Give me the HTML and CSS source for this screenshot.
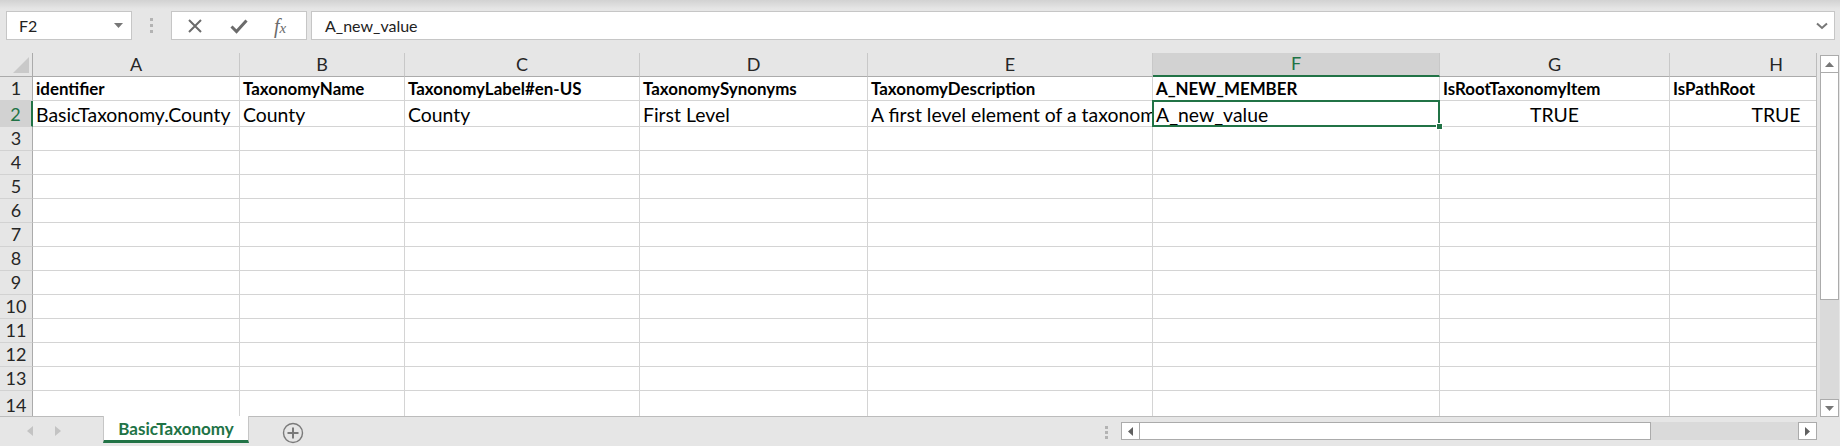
FILE: index.html
```
<!DOCTYPE html>
<html lang="en">
<head>
    <meta charset="UTF-8">
    <title>BasicTaxonomy - Excel</title>
    <link rel="stylesheet" href="styles.css">
</head>
<body>
    <div class="formula-bar">
        <div class="name-box">
            <span>F2</span>
            <svg class="caret" width="9" height="5" viewBox="0 0 9 5"><path d="M0 0h9L4.5 5z" fill="#777"/></svg>
        </div>
        <div class="grip"><i></i><i></i><i></i></div>
        <div class="fx-buttons">
            <svg width="16" height="16" viewBox="0 0 16 16"><path d="M2 2l12 12M14 2L2 14" stroke="#6b6b6b" stroke-width="2" fill="none"/></svg>
            <svg width="18" height="16" viewBox="0 0 18 16"><path d="M1.5 8.5l5 5L16.5 2.5" stroke="#6b6b6b" stroke-width="3" fill="none"/></svg>
            <span class="fx">f<sub>x</sub></span>
        </div>
        <div class="formula-input">
            <span>A_new_value</span>
            <svg width="12" height="8" viewBox="0 0 12 8"><path d="M1 1.5l5 4.5 5-4.5" stroke="#777" stroke-width="2" fill="none"/></svg>
        </div>
    </div>

    <div class="sheet-area">
        <div class="grid-wrap">
            <div class="row head">
                <div class="corner"><svg width="16" height="16" viewBox="0 0 16 16"><path d="M16 0v16H0z" fill="#c9c9c9"/></svg></div>
                <div>A</div><div>B</div><div>C</div><div>D</div><div>E</div><div class="sel">F</div><div>G</div><div>H</div>
            </div>
            <div class="row bold">
                <div class="rh">1</div>
                <div>identifier</div><div>TaxonomyName</div><div>TaxonomyLabel#en-US</div><div>TaxonomySynonyms</div><div>TaxonomyDescription</div><div>A_NEW_MEMBER</div><div>IsRootTaxonomyItem</div><div>IsPathRoot</div>
            </div>
            <div class="row tall">
                <div class="rh sel">2</div>
                <div>BasicTaxonomy.County</div><div>County</div><div>County</div><div>First Level</div><div>A first level element of a taxonomy</div><div class="active">A_new_value</div><div class="center">TRUE</div><div class="center">TRUE</div>
            </div>
            <div class="row"><div class="rh">3</div><div></div><div></div><div></div><div></div><div></div><div></div><div></div><div></div></div>
            <div class="row"><div class="rh">4</div><div></div><div></div><div></div><div></div><div></div><div></div><div></div><div></div></div>
            <div class="row"><div class="rh">5</div><div></div><div></div><div></div><div></div><div></div><div></div><div></div><div></div></div>
            <div class="row"><div class="rh">6</div><div></div><div></div><div></div><div></div><div></div><div></div><div></div><div></div></div>
            <div class="row"><div class="rh">7</div><div></div><div></div><div></div><div></div><div></div><div></div><div></div><div></div></div>
            <div class="row"><div class="rh">8</div><div></div><div></div><div></div><div></div><div></div><div></div><div></div><div></div></div>
            <div class="row"><div class="rh">9</div><div></div><div></div><div></div><div></div><div></div><div></div><div></div><div></div></div>
            <div class="row"><div class="rh">10</div><div></div><div></div><div></div><div></div><div></div><div></div><div></div><div></div></div>
            <div class="row"><div class="rh">11</div><div></div><div></div><div></div><div></div><div></div><div></div><div></div><div></div></div>
            <div class="row"><div class="rh">12</div><div></div><div></div><div></div><div></div><div></div><div></div><div></div><div></div></div>
            <div class="row"><div class="rh">13</div><div></div><div></div><div></div><div></div><div></div><div></div><div></div><div></div></div>
            <div class="row last"><div class="rh">14</div><div></div><div></div><div></div><div></div><div></div><div></div><div></div><div></div></div>
        </div>
        <div class="vscroll">
            <div class="sb-btn"><svg width="9" height="5" viewBox="0 0 9 5"><path d="M0 5h9L4.5 0z" fill="#777"/></svg></div>
            <div class="sb-thumb v"></div>
            <div class="sb-track"></div>
            <div class="sb-btn"><svg width="9" height="5" viewBox="0 0 9 5"><path d="M0 0h9L4.5 5z" fill="#777"/></svg></div>
        </div>
    </div>

    <div class="tab-bar">
        <div class="tab-nav">
            <svg width="6" height="10" viewBox="0 0 6 10"><path d="M6 0v10L0 5z" fill="#c3c3c3"/></svg>
            <svg width="6" height="10" viewBox="0 0 6 10"><path d="M0 0v10l6-5z" fill="#c3c3c3"/></svg>
        </div>
        <div class="sheet-tab">BasicTaxonomy</div>
        <svg class="add-sheet" width="22" height="22" viewBox="0 0 22 22"><circle cx="11" cy="11" r="9.5" stroke="#7a7a7a" stroke-width="1.4" fill="none"/><path d="M11 5.5v11M5.5 11h11" stroke="#7a7a7a" stroke-width="2"/></svg>
        <div class="spacer"></div>
        <div class="grip small"><i></i><i></i><i></i></div>
        <div class="hscroll">
            <div class="sb-btn"><svg width="5" height="9" viewBox="0 0 5 9"><path d="M5 0v9L0 4.5z" fill="#606060"/></svg></div>
            <div class="sb-thumb h"></div>
            <div class="sb-track"></div>
            <div class="sb-btn"><svg width="5" height="9" viewBox="0 0 5 9"><path d="M0 0v9l5-4.5z" fill="#606060"/></svg></div>
        </div>
    </div>
</body>
</html>
```

FILE: styles.css
```
html, body {
    margin: 0;
    padding: 0;
    width: 1840px;
    height: 446px;
    overflow: hidden;
    background-color: #e6e6e6;
    font-family: Lato, "Liberation Sans", sans-serif;
    color: #000;
}

/* formula bar */
.formula-bar {
    height: 53px;
    display: flex;
    align-items: flex-start;
    padding-top: 11px;
    box-sizing: border-box;
    background: linear-gradient(#d2d2d2, #e6e6e6 9px);
}

.name-box {
    margin-left: 6px;
    width: 126px;
    height: 29px;
    box-sizing: border-box;
    border: 1px solid #c6c6c6;
    background-color: #fff;
    display: flex;
    align-items: center;
    justify-content: space-between;
    padding: 0 8px 0 12px;
    font-size: 16px;
    color: #222;
}

.grip {
    width: 39px;
    height: 29px;
    display: flex;
    flex-direction: column;
    align-items: center;
    justify-content: center;
    gap: 3px;
}

.grip i {
    display: block;
    width: 3px;
    height: 3px;
    background-color: #b3b3b3;
}

.fx-buttons {
    width: 136px;
    height: 29px;
    box-sizing: border-box;
    border: 1px solid #c6c6c6;
    background-color: #fff;
    display: flex;
    align-items: center;
    padding-left: 15px;
    gap: 27px;
}

.fx {
    font-family: "Liberation Serif", serif;
    font-style: italic;
    font-size: 20px;
    color: #6b6b6b;
    margin-left: -1px;
    line-height: 1;
}

.fx sub {
    font-size: 15px;
    vertical-align: 0;
}

.formula-input {
    margin-left: 4px;
    width: 1524px;
    height: 29px;
    box-sizing: border-box;
    border: 1px solid #c6c6c6;
    background-color: #fff;
    display: flex;
    align-items: center;
    justify-content: space-between;
    padding: 0 6px 0 13px;
    font-size: 16px;
    color: #222;
}

/* grid */
.sheet-area {
    height: 364px;
    display: flex;
}

.grid-wrap {
    width: 1817px;
    height: 364px;
    overflow: hidden;
    background-color: #fff;
    border-right: 1px solid #bcbcbc;
    border-bottom: 1px solid #bcbcbc;
    box-sizing: border-box;
}

.row {
    display: grid;
    grid-template-columns: 33px 207px 165px 235px 228px 285px 287px 230px 213px;
    height: 24px;
    font-size: 19.4px;
}

.row.tall {
    height: 26px;
}

.row.last {
    height: 27px;
}

.row > div {
    box-sizing: border-box;
    border-right: 1px solid #d4d4d4;
    border-bottom: 1px solid #d4d4d4;
    padding: 0 3px;
    white-space: nowrap;
    overflow: hidden;
    display: flex;
    align-items: flex-end;
    line-height: 23px;
}

.row.bold > div {
    font-weight: bold;
    font-size: 16.9px;
    line-height: 22px;
}

.row > .rh {
    background-color: #e6e6e6;
    border-right-color: #ababab;
    border-bottom-color: #d2d2d2;
    justify-content: center;
    font-weight: normal !important;
    font-size: 18px !important;
    line-height: 23px !important;
    color: #262626;
    padding: 0;
}

.row > .rh.sel {
    background-color: #d2d2d2;
    color: #217346;
    border-right: 2px solid #217346;
}

.row.head > div {
    background-color: #e6e6e6;
    border-right-color: #c8c8c8;
    border-bottom-color: #ababab;
    justify-content: center;
    font-size: 18px;
    color: #262626;
}

.row.head > .corner {
    border-right-color: #ababab;
    padding: 0 3px 3px 0;
    justify-content: flex-end;
}

.row.head > .sel {
    background-color: #d2d2d2;
    color: #217346;
    border-bottom: 2px solid #217346;
}

.row.head > .corner svg {
    display: block;
}

.row > .center {
    justify-content: center;
}

.row > .active {
    position: relative;
    overflow: visible;
}

.row > .active::after {
    content: "";
    position: absolute;
    left: -1px;
    top: -1px;
    right: -1px;
    bottom: -1px;
    border: 2px solid #217346;
}

.row > .active::before {
    content: "";
    position: absolute;
    right: -4px;
    bottom: -4px;
    width: 5px;
    height: 5px;
    background-color: #217346;
    border: 1px solid #fff;
    z-index: 1;
}

/* scrollbars */
.vscroll {
    margin: 2px 0 0 3px;
    width: 19px;
    display: flex;
    flex-direction: column;
}

.sb-btn {
    box-sizing: border-box;
    border: 1px solid #ababab;
    background-color: #fff;
    display: flex;
    align-items: center;
    justify-content: center;
}

.vscroll .sb-btn {
    height: 18px;
}

.sb-thumb {
    box-sizing: border-box;
    border: 1px solid #ababab;
    background-color: #fff;
}

.sb-thumb.v {
    height: 227px;
    border-top: none;
}

.sb-track {
    flex: 1;
    background-color: #dadada;
}

.tab-bar {
    height: 29px;
    display: flex;
    align-items: flex-start;
}

.tab-nav {
    width: 103px;
    height: 27px;
    display: flex;
    align-items: center;
    padding-left: 27px;
    gap: 22px;
    box-sizing: border-box;
}

.sheet-tab {
    width: 146px;
    height: 27px;
    box-sizing: border-box;
    background-color: #fff;
    border-left: 1px solid #c6c6c6;
    border-right: 1px solid #c6c6c6;
    border-bottom: 3px solid #217346;
    color: #217346;
    font-weight: bold;
    font-size: 17px;
    display: flex;
    align-items: center;
    justify-content: center;
    margin-top: -1px;
}

.add-sheet {
    margin: 5px 0 0 33px;
}

.spacer {
    flex: 1;
}

.grip.small {
    width: 5px;
    height: 18px;
    margin: 6px 12px 0 0;
    gap: 2px;
}

.hscroll {
    margin: 5px 23px 0 0;
    width: 696px;
    height: 18px;
    display: flex;
}

.hscroll .sb-btn {
    width: 19px;
}

.sb-thumb.h {
    width: 511px;
    border-left: none;
}
```
